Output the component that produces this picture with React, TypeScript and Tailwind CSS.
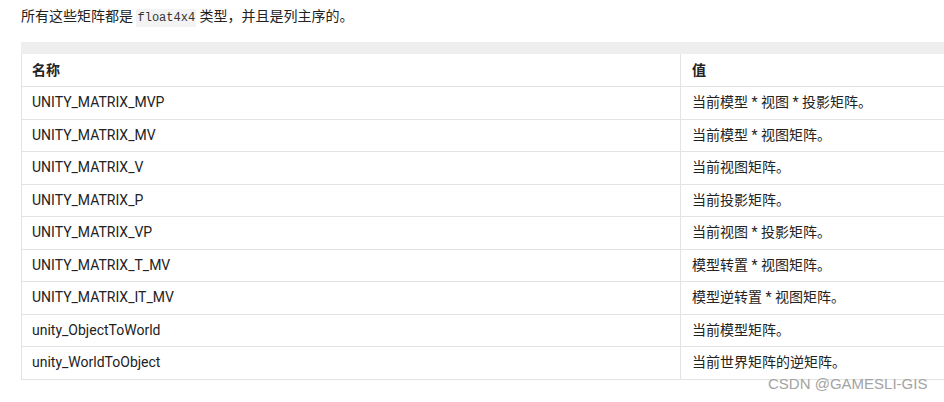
import React from 'react'

const rows: [string, string][] = [
  ['UNITY_MATRIX_MVP', '当前模型 * 视图 * 投影矩阵。'],
  ['UNITY_MATRIX_MV', '当前模型 * 视图矩阵。'],
  ['UNITY_MATRIX_V', '当前视图矩阵。'],
  ['UNITY_MATRIX_P', '当前投影矩阵。'],
  ['UNITY_MATRIX_VP', '当前视图 * 投影矩阵。'],
  ['UNITY_MATRIX_T_MV', '模型转置 * 视图矩阵。'],
  ['UNITY_MATRIX_IT_MV', '模型逆转置 * 视图矩阵。'],
  ['unity_ObjectToWorld', '当前模型矩阵。'],
  ['unity_WorldToObject', '当前世界矩阵的逆矩阵。'],
]

const font = { fontFamily: 'Roboto, "Noto Sans CJK SC", sans-serif' }

export default function App() {
  return (
    <div className="relative w-[944px] h-[402px] overflow-hidden bg-white text-[#222]" style={font}>
      {/* intro line */}
      <p className="pl-[21px] pt-[5px] text-[14px] leading-[22px]">
        所有这些矩阵都是{' '}
        <code className="bg-[#f3f3f3] px-[1px] py-[2px] text-[12px] font-['Liberation_Mono',monospace] text-[#333]">float4x4</code>{' '}
        类型，并且是列主序的。
      </p>

      {/* table */}
      <div className="mt-[13px] ml-[21px] w-[940px]">
        <div className="h-[12px] bg-[#eeeeee]" />
        <div className="border-l border-[#e3e3e3]">
          <div className="grid grid-cols-[659px_1fr] h-[32px] text-[14px] font-bold">
            <div className="flex items-center pl-[10px] border-r border-[#e3e3e3]">名称</div>
            <div className="flex items-center pl-[11px]">值</div>
          </div>
          {rows.map(([name, value]) => (
            <div key={name} className="grid grid-cols-[659px_1fr] h-[32.5px] border-t border-[#e3e3e3] text-[14px]">
              <div className="flex items-center pl-[10px] border-r border-[#e3e3e3]">{name}</div>
              <div className="flex items-center pl-[11px]">{value}</div>
            </div>
          ))}
          <div className="border-t border-[#e3e3e3]" />
        </div>
      </div>

      {/* watermark */}
      <div className="absolute left-[768px] top-[375px] text-[15px] leading-[18px] text-[#a3a3a3] font-['Liberation_Sans',sans-serif]">
        CSDN @GAMESLI-GIS
      </div>
    </div>
  )
}
